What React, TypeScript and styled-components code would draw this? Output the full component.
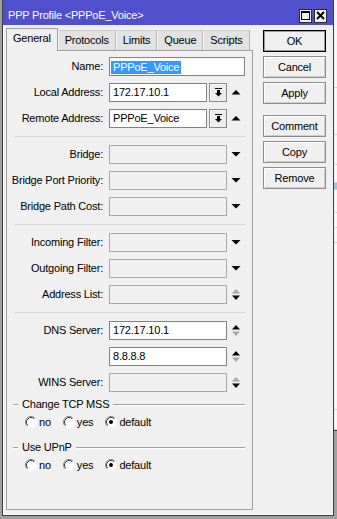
import React from "react";
import styled, { createGlobalStyle } from "styled-components";

const Global = createGlobalStyle`
  html, body { margin: 0; padding: 0; }
  body {
    background: #a0a0a0;
    font-family: "Liberation Sans", Arial, sans-serif;
    font-size: 11px;
    letter-spacing: -0.2px;
    color: #000;
    overflow: hidden;
  }
`;

const Page = styled.div`
  display: flex;
  align-items: flex-start;
  width: 337px;
  height: 519px;
  padding-left: 2px;
  box-sizing: border-box;
`;

const Window = styled.div`
  width: 332px;
  height: 516px;
  flex: none;
  box-sizing: border-box;
  border: 1px solid #3c3c3c;
  border-top: none;
  background: #f0f0f0;
  box-shadow: inset 1px 0 0 #fff, inset 0 -1px 0 #fff;
  display: flex;
  flex-direction: column;
`;

const TitleBar = styled.div`
  height: 25px;
  box-sizing: border-box;
  padding: 6px 6px 0 5px;
  background: #5050cc;
  color: #fff;
  display: flex;
  align-items: center;
  gap: 2px;
`;

const TitleText = styled.div`
  flex: 1;
  line-height: 13px;
`;

const TitleButton = styled.div`
  width: 13px;
  height: 14px;
  box-sizing: border-box;
  border: 1px solid #2a2a2a;
  background: #f0f0f0;
  box-shadow: inset 1px 1px 0 #fff;
  display: flex;
  align-items: center;
  justify-content: center;
`;

const Body = styled.div`
  display: flex;
  gap: 10px;
  padding: 3px 6px 0 3px;
`;

const LeftCol = styled.div`
  width: 247px;
  display: flex;
  flex-direction: column;
`;

const TabStrip = styled.div`
  height: 22px;
  display: flex;
  align-items: flex-end;
`;

const Tab = styled.div<{ $active?: boolean }>`
  box-sizing: border-box;
  height: ${(p) => (p.$active ? 23 : 20)}px;
  margin-bottom: ${(p) => (p.$active ? -1 : 0)}px;
  padding: 3px 6px 0;
  line-height: 13px;
  position: relative;
  z-index: ${(p) => (p.$active ? 2 : 0)};
  background: ${(p) => (p.$active ? "#f0f0f0" : "#e2e2e2")};
  border-top: 1px solid ${(p) => (p.$active ? "#a0a0a0" : "#cfcfcf")};
  border-left: 1px solid ${(p) => (p.$active ? "#a0a0a0" : "#f8f8f8")};
  border-right: 1px solid ${(p) => (p.$active ? "#a0a0a0" : "#b8b8b8")};
`;

const Panel = styled.div`
  height: 460px;
  box-sizing: border-box;
  border: 1px solid #a0a0a0;
  padding-top: 6px;
  display: flex;
  flex-direction: column;
`;

const Section = styled.div`
  display: flex;
  flex-direction: column;
  gap: 7px;
`;

const Separator = styled.div`
  height: 1px;
  width: 231px;
  margin: 8px 0 8px 7px;
  background: #d6d6d6;
`;

const Row = styled.div`
  height: 19px;
  display: flex;
  align-items: center;
`;

const Label = styled.div`
  width: 96px;
  margin-right: 6px;
  text-align: right;
  white-space: nowrap;
  line-height: 19px;
`;

const TextBox = styled.div<{ $w: number; $disabled?: boolean; $pad?: number }>`
  width: ${(p) => p.$w}px;
  height: 19px;
  box-sizing: border-box;
  border: 1px solid ${(p) => (p.$disabled ? "#a9a9a9" : "#828282")};
  background: ${(p) => (p.$disabled ? "#f0f0f0" : "#fff")};
  padding-left: ${(p) => p.$pad ?? 3}px;
  line-height: 17px;
  white-space: nowrap;
  overflow: hidden;
`;

const Selected = styled.span`
  display: inline-block;
  background: #3399ff;
  color: #fff;
  line-height: 13px;
  padding: 0 2px;
  vertical-align: middle;
`;

const DropButton = styled.div`
  width: 18px;
  height: 19px;
  margin-left: 2px;
  box-sizing: border-box;
  border: 1px solid #8a8a8a;
  background: #ececec;
  box-shadow: inset 1px 1px 0 #fff;
  display: flex;
  align-items: center;
  justify-content: center;
`;

const ArrowCell = styled.div`
  width: 10px;
  height: 19px;
  margin-left: 4px;
`;

const GroupHeader = styled.div<{ $top: number }>`
  display: flex;
  align-items: center;
  gap: 4px;
  width: 232px;
  height: 13px;
  margin: ${(p) => p.$top}px 0 0 6px;
  line-height: 13px;
`;

const GroupDash = styled.div`
  width: 5px;
  border-top: 1px solid #a0a0a0;
  border-bottom: 1px solid #fff;
`;

const GroupLine = styled.div`
  flex: 1;
  border-top: 1px solid #a0a0a0;
  border-bottom: 1px solid #fff;
`;

const RadioRow = styled.div`
  display: flex;
  align-items: center;
  gap: 12px;
  height: 14px;
  margin-top: 4px;
  padding-left: 18px;
`;

const RadioItem = styled.div`
  display: flex;
  align-items: center;
  gap: 2px;
  line-height: 13px;
`;

const RightCol = styled.div`
  width: 63px;
  margin-top: 2px;
  display: flex;
  flex-direction: column;
  gap: 4px;
`;

const ActionButton = styled.div<{ $default?: boolean; $gapBefore?: boolean }>`
  height: 22px;
  box-sizing: border-box;
  margin-top: ${(p) => (p.$gapBefore ? 7 : 0)}px;
  border: 1px solid ${(p) => (p.$default ? "#000" : "#8e8e8e")};
  background: #f0f0f0;
  box-shadow: ${(p) =>
    p.$default ? "inset 0 0 0 1px #9a9a9a" : "inset 1px 1px 0 #fff, inset -1px -1px 0 #cfcfcf"};
  display: flex;
  align-items: center;
  justify-content: center;
  line-height: 13px;
`;

const Strip = styled.div`
  flex: 1;
  display: flex;
  flex-direction: column;
`;

const StripRow = styled.div<{ $h: number; $sel?: boolean }>`
  height: ${(p) => p.$h}px;
  box-sizing: border-box;
  background: ${(p) => (p.$sel ? "#9cc3ef" : "#f7f7f7")};
  border-bottom: 1px solid #d0d0d0;
`;

const StripEnd = styled.div`
  height: 1px;
  background: #404040;
`;

/* ---------- icons ---------- */

const UpArrow = ({ color = "#000" }: { color?: string }) => (
  <svg width="10" height="19" viewBox="0 0 10 19">
    <polygon points="0.5,11.5 9.5,11.5 5,7" fill={color} />
  </svg>
);

const DownArrow = () => (
  <svg width="10" height="19" viewBox="0 0 10 19">
    <polygon points="0.5,7 9.5,7 5,11.5" fill="#000" />
  </svg>
);

const SpinArrows = ({ up, down }: { up: string; down: string }) => (
  <svg width="10" height="19" viewBox="0 0 10 19">
    <polygon points="1,8.5 9,8.5 5,4" fill={up} />
    <polygon points="1,10.5 9,10.5 5,15" fill={down} />
  </svg>
);

const DropIcon = () => (
  <svg width="7" height="9" viewBox="0 0 7 9">
    <rect x="0" y="0" width="7" height="1" fill="#000" />
    <rect x="2" y="2" width="3" height="3" fill="#000" />
    <polygon points="0,5 7,5 3.5,8.5" fill="#000" />
  </svg>
);

const MaxIcon = () => (
  <svg width="9" height="9" viewBox="0 0 9 9">
    <rect x="0.5" y="0.5" width="8" height="8" fill="none" stroke="#000" />
    <rect x="0" y="0" width="9" height="2" fill="#000" />
  </svg>
);

const CloseIcon = () => (
  <svg width="9" height="9" viewBox="0 0 9 9">
    <path d="M1 1 L8 8 M8 1 L1 8" stroke="#000" strokeWidth="1.8" />
  </svg>
);

const RadioIcon = ({ checked }: { checked?: boolean }) => (
  <svg width="12" height="12" viewBox="0 0 12 12">
    <circle cx="6" cy="6" r="5" fill="#fff" />
    <path d="M2.11 9.89 A5.5 5.5 0 0 1 9.89 2.11" fill="none" stroke="#808080" />
    <path d="M9.89 2.11 A5.5 5.5 0 0 1 2.11 9.89" fill="none" stroke="#ffffff" />
    <path d="M2.82 9.18 A4.5 4.5 0 0 1 9.18 2.82" fill="none" stroke="#404040" />
    {checked && <circle cx="6" cy="6" r="2" fill="#000" />}
  </svg>
);

/* ---------- parts ---------- */

const Radios = () => (
  <RadioRow>
    <RadioItem>
      <RadioIcon />
      no
    </RadioItem>
    <RadioItem>
      <RadioIcon />
      yes
    </RadioItem>
    <RadioItem>
      <RadioIcon checked />
      default
    </RadioItem>
  </RadioRow>
);

const ComboRow = ({ label, value }: { label: string; value: string }) => (
  <Row>
    <Label>{label}</Label>
    <TextBox $w={98}>{value}</TextBox>
    <DropButton>
      <DropIcon />
    </DropButton>
    <ArrowCell>
      <UpArrow />
    </ArrowCell>
  </Row>
);

const DisabledRow = ({ label }: { label: string }) => (
  <Row>
    <Label>{label}</Label>
    <TextBox $w={118} $disabled />
    <ArrowCell>
      <DownArrow />
    </ArrowCell>
  </Row>
);

const SpinRow = ({
  label,
  value,
  up,
  down,
}: {
  label: string;
  value?: string;
  up: string;
  down: string;
}) => (
  <Row>
    <Label>{label}</Label>
    <TextBox $w={118} $disabled={value === undefined}>
      {value}
    </TextBox>
    <ArrowCell>
      <SpinArrows up={up} down={down} />
    </ArrowCell>
  </Row>
);

const stripRows: { h: number; sel?: boolean }[] = [
  { h: 88 },
  { h: 47 },
  { h: 30 },
  { h: 18 },
  { h: 7, sel: true },
  { h: 23 },
  { h: 15 },
  { h: 15 },
  { h: 167 },
  { h: 20 },
];

export default function App() {
  return (
    <>
      <Global />
      <Page>
        <Window>
          <TitleBar>
            <TitleText>PPP Profile &lt;PPPoE_Voice&gt;</TitleText>
            <TitleButton>
              <MaxIcon />
            </TitleButton>
            <TitleButton>
              <CloseIcon />
            </TitleButton>
          </TitleBar>
          <Body>
            <LeftCol>
              <TabStrip>
                <Tab $active>General</Tab>
                <Tab>Protocols</Tab>
                <Tab>Limits</Tab>
                <Tab>Queue</Tab>
                <Tab>Scripts</Tab>
              </TabStrip>
              <Panel>
                <Section>
                  <Row>
                    <Label>Name:</Label>
                    <TextBox $w={136} $pad={1}>
                      <Selected>PPPoE_Voice</Selected>
                    </TextBox>
                  </Row>
                  <ComboRow label="Local Address:" value="172.17.10.1" />
                  <ComboRow label="Remote Address:" value="PPPoE_Voice" />
                </Section>
                <Separator />
                <Section>
                  <DisabledRow label="Bridge:" />
                  <DisabledRow label="Bridge Port Priority:" />
                  <DisabledRow label="Bridge Path Cost:" />
                </Section>
                <Separator />
                <Section>
                  <DisabledRow label="Incoming Filter:" />
                  <DisabledRow label="Outgoing Filter:" />
                  <SpinRow label="Address List:" up="#a8a8a8" down="#000" />
                </Section>
                <Separator />
                <Section>
                  <SpinRow label="DNS Server:" value="172.17.10.1" up="#000" down="#a8a8a8" />
                  <SpinRow label="" value="8.8.8.8" up="#000" down="#a8a8a8" />
                  <SpinRow label="WINS Server:" up="#a8a8a8" down="#000" />
                </Section>
                <GroupHeader $top={6}>
                  <GroupDash />
                  Change TCP MSS
                  <GroupLine />
                </GroupHeader>
                <Radios />
                <GroupHeader $top={12}>
                  <GroupDash />
                  Use UPnP
                  <GroupLine />
                </GroupHeader>
                <Radios />
              </Panel>
            </LeftCol>
            <RightCol>
              <ActionButton $default>OK</ActionButton>
              <ActionButton>Cancel</ActionButton>
              <ActionButton>Apply</ActionButton>
              <ActionButton $gapBefore>Comment</ActionButton>
              <ActionButton>Copy</ActionButton>
              <ActionButton>Remove</ActionButton>
            </RightCol>
          </Body>
        </Window>
        <Strip>
          {stripRows.map((r, i) => (
            <StripRow key={i} $h={r.h} $sel={r.sel} />
          ))}
          <StripEnd />
        </Strip>
      </Page>
    </>
  );
}
